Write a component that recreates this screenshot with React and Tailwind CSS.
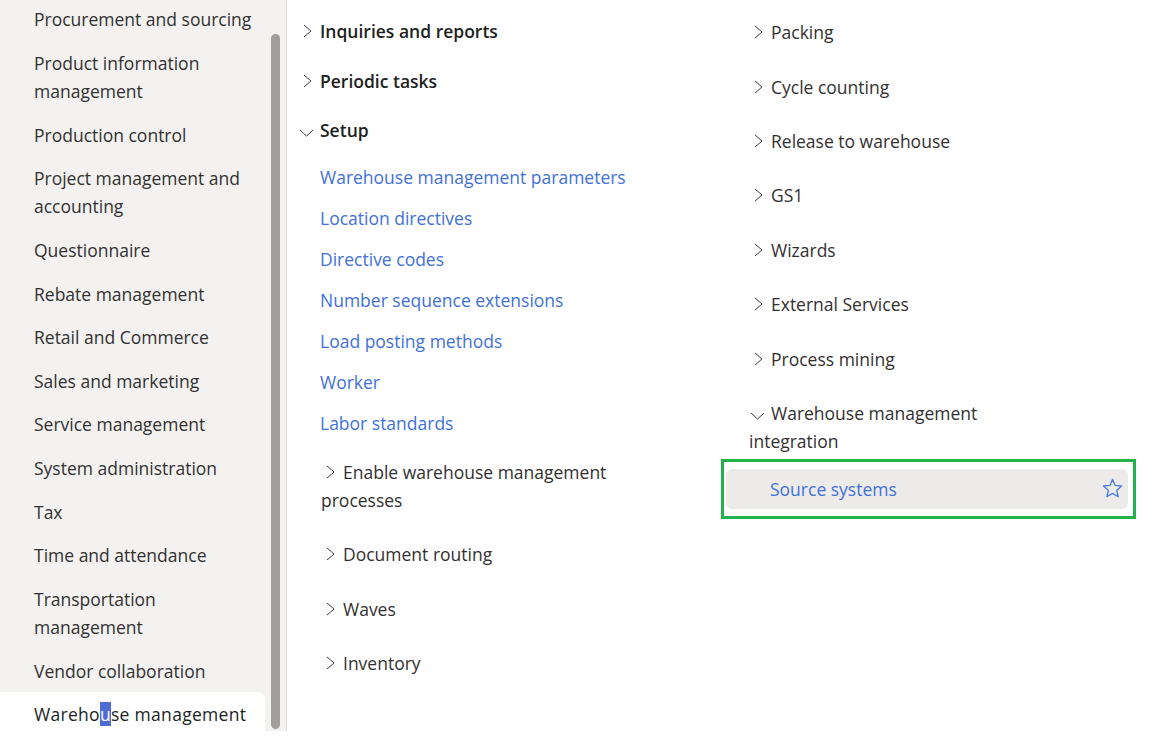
import React from 'react'

const modules = [
  ['Procurement and sourcing'],
  ['Product information', 'management'],
  ['Production control'],
  ['Project management and', 'accounting'],
  ['Questionnaire'],
  ['Rebate management'],
  ['Retail and Commerce'],
  ['Sales and marketing'],
  ['Service management'],
  ['System administration'],
  ['Tax'],
  ['Time and attendance'],
  ['Transportation', 'management'],
  ['Vendor collaboration'],
]

const setupLinks = [
  'Warehouse management parameters',
  'Location directives',
  'Directive codes',
  'Number sequence extensions',
  'Load posting methods',
  'Worker',
  'Labor standards',
]

const rightGroups = [
  'Packing',
  'Cycle counting',
  'Release to warehouse',
  'GS1',
  'Wizards',
  'External Services',
  'Process mining',
]

function ChevronRight() {
  return (
    <svg width="9" height="14" viewBox="0 0 9 14" className="inline-block align-[-1px] text-[#3b3a39]">
      <path d="M1 1l7 6-7 6" fill="none" stroke="currentColor" strokeWidth="1" />
    </svg>
  )
}

function ChevronDown() {
  return (
    <svg width="15" height="8" viewBox="0 0 15 8" className="inline-block align-[3px] text-[#3b3a39]">
      <path d="M1 1l6.5 6 6.5-6" fill="none" stroke="currentColor" strokeWidth="1" />
    </svg>
  )
}

function Star() {
  return (
    <svg width="23" height="23" viewBox="0 0 24 24" className="text-[#4a7ce0]">
      <path
        d="M12 2.5l2.8 6.3 6.8.6-5.2 4.5 1.6 6.7L12 17.1l-5.9 3.5 1.6-6.7-5.2-4.5 6.8-.6z"
        fill="none"
        stroke="currentColor"
        strokeWidth="1.4"
        strokeLinejoin="round"
      />
    </svg>
  )
}

function GroupRow({ lines, open, bold }) {
  return (
    <div className={`leading-[28px] ${bold ? 'font-semibold text-[#201f1e]' : 'text-[#323130]'}`}>
      {lines.map((line, i) => (
        <div key={i}>
          {i === 0 && (
            <span className={`inline-flex justify-center ${open ? 'w-[22px] pr-[6px]' : 'w-[22px] pr-[5px] pl-[2px]'}`}>
              {open ? <ChevronDown /> : <ChevronRight />}
            </span>
          )}
          {line}
        </div>
      ))}
    </div>
  )
}

export default function App() {
  return (
    <div
      className="w-[1156px] h-[740px] flex bg-white overflow-hidden text-[17.5px]"
      style={{ fontFamily: '"Open Sans", "Noto Sans", sans-serif' }}
    >
      {/* module list */}
      <div className="w-[287px] h-[731px] shrink-0 flex bg-[#f3f2f1] border-r border-[#e1dfdd]">
        <div className="w-[265px] -mt-[2.5px] flex flex-col">
          {modules.map((m) => (
            <div key={m[0]} className="pl-[34px] py-[7.65px] leading-[28.3px] text-[#323130]">
              {m.map((l) => (
                <div key={l}>{l}</div>
              ))}
            </div>
          ))}
          <div className="pl-[34px] py-[7.65px] leading-[28.3px] tracking-[0.3px] text-[#201f1e] bg-white rounded-tr-[7px]">
            Wareho<span className="bg-[#4f6bd6] text-white">u</span>se management
          </div>
        </div>
        <div className="ml-[6px] mt-[34px] mb-[2px] w-[9px] rounded-full bg-[#a19f9d]" />
      </div>

      {/* setup column */}
      <div className="w-[434px] shrink-0 pl-[11px] pt-[6.5px] flex flex-col">
        {['Inquiries and reports', 'Periodic tasks'].map((t) => (
          <div key={t} className="h-[49.5px] flex items-center">
            <GroupRow lines={[t]} bold />
          </div>
        ))}
        <div className="h-[49.5px] flex items-center">
          <GroupRow lines={['Setup']} open bold />
        </div>
        <div className="flex flex-col pl-[22px] mt-[1.5px]">
          {setupLinks.map((l) => (
            <div key={l} className="h-[41px] flex items-center text-[#4271d9] leading-[28px]">
              {l}
            </div>
          ))}
        </div>
        <div className="pl-[23px] pt-[1.5px] flex flex-col">
          <div className="py-[13px]">
            <GroupRow lines={['Enable warehouse management', 'processes']} />
          </div>
          {['Document routing', 'Waves', 'Inventory'].map((t) => (
            <div key={t} className="h-[54.5px] flex items-center">
              <GroupRow lines={[t]} />
            </div>
          ))}
        </div>
      </div>

      {/* right column */}
      <div className="w-[415px] shrink-0 pt-[5px] flex flex-col">
        <div className="pl-[28px] flex flex-col">
          {rightGroups.map((t) => (
            <div key={t} className="h-[54.4px] flex items-center">
              <GroupRow lines={[t]} />
            </div>
          ))}
          <div className="pt-[13px] pb-[13px]">
            <GroupRow lines={['Warehouse management', 'integration']} open />
          </div>
        </div>
        <div className="-mt-[9px] border-[3px] border-[#22b14c] pt-[7px] pb-[7px] pl-[2px] pr-[5px]">
          <div className="h-[40px] rounded-[6px] bg-[#edebe9] pl-[44px] pr-[4px] flex items-center justify-between">
            <span className="text-[#4271d9]">Source systems</span>
            <Star />
          </div>
        </div>
      </div>
    </div>
  )
}
